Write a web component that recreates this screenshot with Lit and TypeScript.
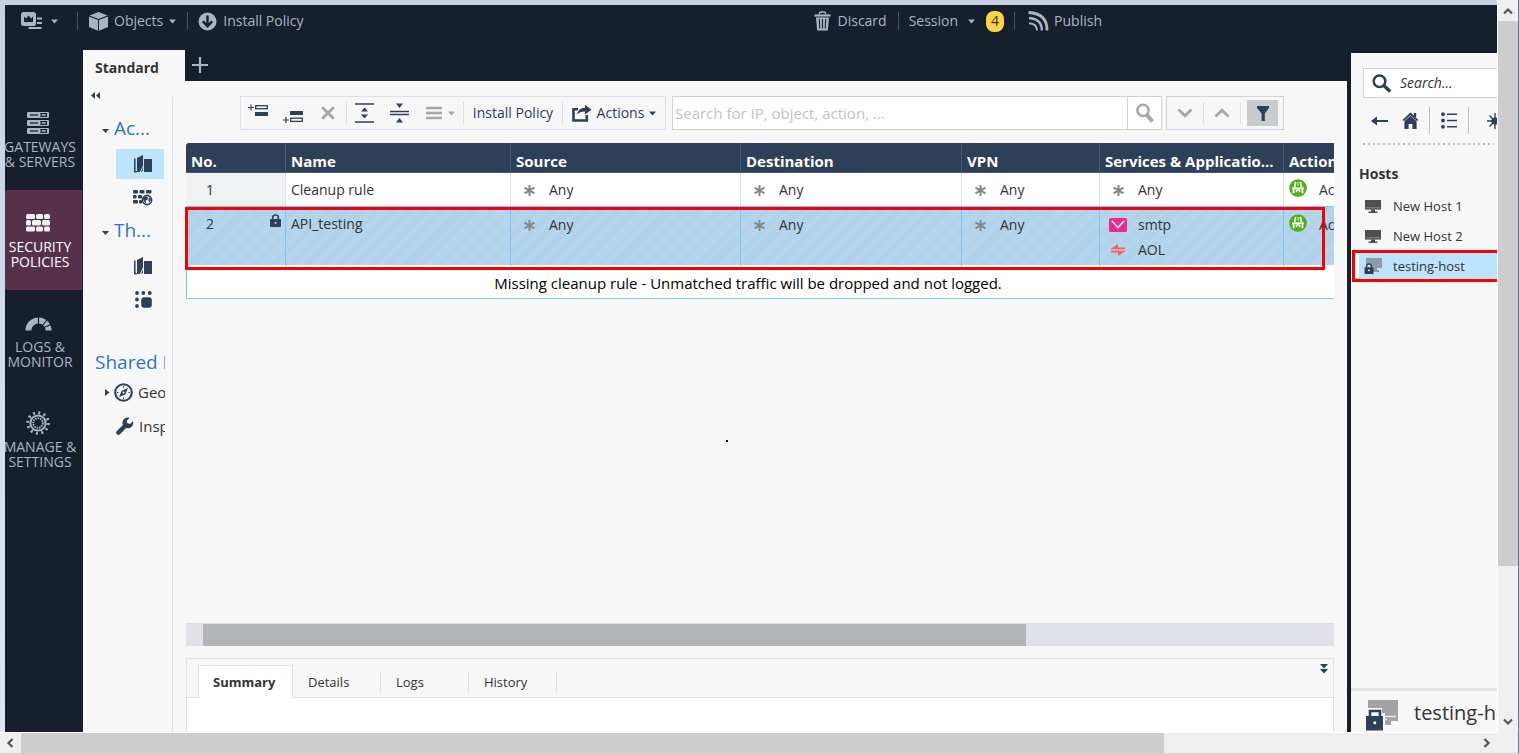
import { LitElement, html, css, svg } from "lit";
import { customElement, state } from "lit/decorators.js";

const caret = html`<svg class="caret" width="7" height="5" viewBox="0 0 7 5"><path d="M0 0.5h7L3.5 4.5z" fill="currentColor" /></svg>`;

const icon = (w: number, h: number, body: unknown) =>
  html`<svg width=${w} height=${h} viewBox="0 0 ${w} ${h}" fill="none" stroke="none" aria-hidden="true">${body}</svg>`;

const I = {
  menu: icon(22, 20, svg`
    <rect x="0" y="1" width="15" height="14" rx="2.5" fill="#aab4c6"/>
    <path d="M3 5.5l1.8 2 2.7-3 2.7 3L12 5.5v5.5H3z" fill="#181f2c"/>
    <path d="M16 7.5h5M16 12h5M7.5 17h13" stroke="#aab4c6" stroke-width="2"/>`),
  cube: icon(19, 19, svg`
    <path d="M9.5 0L18.5 3.4 9.5 7 .5 3.4z" fill="#aab4c6"/>
    <path d="M0 4.6L9 8v10.8L0 15z" fill="#aab4c6"/><path d="M19 4.6L10 8v10.8L19 15z" fill="#aab4c6"/>`),
  down: icon(19, 19, svg`
    <circle cx="9.5" cy="9.5" r="9" fill="#aab4c6"/>
    <path d="M9.5 3.5v10M4.8 9.3l4.7 4.9 4.7-4.9" stroke="#181f2c" stroke-width="2.4"/>`),
  trash: icon(17, 20, svg`
    <path d="M5.5 3.5V2.2Q5.5 1 7 1h3q1.5 0 1.5 1.2v1.3" stroke="#aab4c6" stroke-width="1.4"/>
    <path d="M.5 3.4h16v2.2H.5z" fill="#aab4c6"/>
    <path d="M2 6.6h13l-1.2 13H3.2z" fill="#aab4c6"/>
    <path d="M5.3 8l.5 9.5M8.5 8v9.5M11.7 8l-.5 9.5" stroke="#181f2c" stroke-width="1.1"/>`),
  publish: icon(21, 20, svg`
    <path d="M.5 1.5Q19.5 2.5 19 19.5" stroke="#aab4c6" stroke-width="2.8"/>
    <path d="M1 7Q14 8 13.8 19.5" stroke="#aab4c6" stroke-width="2.3"/>
    <path d="M1 12.3q8 .6 8 7.2" stroke="#aab4c6" stroke-width="1.9"/>`),
  servers: icon(22, 22, svg`
    ${[0, 8, 16].map((y) => svg`<rect x="0" y=${y} width="22" height="6" rx="1" fill="#aab4c6"/>
      <path d="M3 ${y + 3}h8" stroke="#181f2c" stroke-width="1.3"/>
      <rect x="14" y=${y + 1.6} width="5.4" height="2.8" stroke="#181f2c" stroke-width="1.2"/>`)}`),
  bricks: icon(24, 18, svg`<g fill="#f1f1f6">
    <rect x="0" y="0" width="9" height="5" rx="1.5"/><rect x="10" y="0" width="7" height="5" rx="1.5"/><rect x="18" y="0" width="6" height="5" rx="1.5"/>
    <rect x="0" y="6" width="5" height="5.6" rx="1.5"/><rect x="6" y="6" width="9" height="5.6" rx="1.5"/><rect x="16" y="6" width="8" height="5.6" rx="1.5"/>
    <rect x="0" y="12.6" width="9" height="5" rx="1.5"/><rect x="10" y="12.6" width="7" height="5" rx="1.5"/><rect x="18" y="12.6" width="6" height="5" rx="1.5"/></g>`),
  gauge: icon(27, 15, svg`
    <path d="M3.4 14.5A10.1 10.1 0 0 1 23.6 14.5" stroke="#aab4c6" stroke-width="6"/>
    <path d="M13.5 0v8.5M17.5 9.5L23 2.5M19 11.5l8-3.4" stroke="#181f2c" stroke-width="1.2"/>`),
  gear: icon(24, 24, svg`
    <circle cx="12" cy="12" r="7.6" stroke="#aab4c6" stroke-width="2"/>
    <circle cx="12" cy="12" r="10.3" stroke="#aab4c6" stroke-width="3" stroke-dasharray="2 3.393"/>
    <circle cx="12" cy="12" r="4.8" stroke="#aab4c6" stroke-width="1.8" stroke-dasharray="1.6 .8"/>`),
  book: icon(18, 18, svg`
    <path d="M.8 3.5v13.2h2" stroke="#2e4057" stroke-width="1.5"/>
    <path d="M3 3L9 0v10.5L5.8 17H3z" fill="#2e4057"/><path d="M9 12v3.8L7 17z" fill="#2e4057"/>
    <rect x="10" y="4" width="8" height="13" fill="#2e4057"/>`),
  nat: icon(20, 17, svg`<g fill="#2e4057">
    <rect x="0" y="1" width="5" height="3.6" rx="1"/><rect x="6.5" y="1" width="5" height="3.6" rx="1"/><rect x="13" y="1" width="5.5" height="3.6" rx="1"/>
    <rect x="0" y="6" width="3.6" height="3.6" rx="1"/><rect x="5" y="6" width="4" height="3.6" rx="1"/>
    <rect x="0" y="11" width="5" height="3.6" rx="1"/><rect x="6" y="11" width="3" height="3.6" rx="1"/></g>
    <circle cx="14" cy="11" r="4.6" stroke="#2e4057" stroke-width="1.6"/><path d="M10 8.5l3.5-1 1.5 1-.5 2.2-1.8.8.5 3-1.6-1.2-1.4-2.6zM16 8l2 2.5-1.5 3-1.2-2z" fill="#2e4057"/>`),
  dots: icon(17, 17, svg`<g fill="#2e4057">
    <circle cx="2" cy="2" r="1.9"/><circle cx="8.3" cy="2" r="1.9"/><circle cx="14.8" cy="2" r="1.9"/>
    <circle cx="2" cy="8.5" r="1.9"/><circle cx="2" cy="15" r="1.9"/><rect x="6.2" y="6.2" width="10.6" height="10.6" rx="3"/></g>`),
  compass: icon(19, 19, svg`
    <circle cx="9.5" cy="9.5" r="8.3" stroke="#2e4057" stroke-width="2.1"/>
    <path d="M14 5l-2.7 6.4L5 14l2.7-6.3z" fill="#2e4057"/><circle cx="9.5" cy="9.5" r="1" fill="#f7f7f7"/>
    <path d="M9.5 3v1.5M9.5 14.5V16M3 9.5h1.5M14.5 9.5H16" stroke="#2e4057"/>`),
  wrench: icon(18, 18, svg`
    <path d="M2.4 15.6L9.8 8.2" stroke="#2e4057" stroke-width="4.4" stroke-linecap="round"/>
    <path d="M13.8 0.8A5.4 5.4 0 1 0 17 4.3L14 7l-2.6-.8-.7-2.5z" fill="#2e4057"/>`),
  addAbove: icon(20, 16, svg`
    <path d="M0 3.5h6M3 .5v6" stroke="#2e4057" stroke-width="1.2"/>
    <rect x="7.7" y="1.7" width="11.6" height="3" stroke="#2e4057" stroke-width="1.3"/><rect x="7" y="8" width="13" height="4" fill="#2e4057"/>`),
  addBelow: icon(20, 12, svg`
    <path d="M0 9h6M3 6v6" stroke="#2e4057" stroke-width="1.2"/>
    <rect x="7" y="0" width="13" height="4" fill="#2e4057"/><rect x="7.7" y="7.2" width="11.6" height="3.2" stroke="#2e4057" stroke-width="1.3"/>`),
  cross: icon(14, 14, svg`<path d="M1.2 1.2l11.6 11.6M12.8 1.2L1.2 12.8" stroke="#a4a7ab" stroke-width="2.8"/>`),
  expand: icon(19, 20, svg`
    <path d="M0 1h19M0 19h19" stroke="#2e4057" stroke-width="1.6"/><path d="M6 8.5h7L9.5 4.5zM6 11.5h7l-3.5 4z" fill="#2e4057"/>`),
  collapse: icon(19, 20, svg`
    <path d="M0 8.5h19M0 11.5h19" stroke="#2e4057" stroke-width="1.4"/><path d="M6 0.5h7L9.5 5zM6 19.5h7L9.5 15z" fill="#2e4057"/>`),
  lines: icon(16, 14, svg`<path d="M0 2h16M0 7h16M0 12h16" stroke="#a4a7ab" stroke-width="2.4"/>`),
  share: icon(20, 18, svg`
    <path d="M6 5.2H1.5v11.3h13.3V11" stroke="#2e4057" stroke-width="2.6"/>
    <path d="M5.2 10.8Q6 4 13 3.8V.8l6.6 5L13 10.4V7.6Q8 7.4 5.2 10.8z" fill="#2e4057"/>`),
  lensGrey: icon(18, 20, svg`<circle cx="7" cy="7.3" r="5.6" stroke="#a4a7ab" stroke-width="2.5"/><path d="M11 12l5.4 6.6" stroke="#a4a7ab" stroke-width="4"/>`),
  lens: icon(20, 19, svg`<circle cx="7.5" cy="7.3" r="5.8" stroke="#2e4057" stroke-width="2.5"/><path d="M11.8 11.5l6.4 6" stroke="#2e4057" stroke-width="3.4"/>`),
  chevDown: icon(16, 10, svg`<path d="M1.5 1.5L8 7.8l6.5-6.3" stroke="#a4a7ab" stroke-width="2.8"/>`),
  chevUp: icon(16, 10, svg`<path d="M1.5 8.5L8 2.2l6.5 6.3" stroke="#a4a7ab" stroke-width="2.8"/>`),
  funnel: icon(12, 15, svg`<path d="M0 0h12v2L7.8 7.5V15H4.6V7.5L0 2z" fill="#2e4057"/>`),
  any: icon(11, 11, svg`<path d="M5.5 0v11M.5 2.6l10 5.8M.5 8.4l10-5.8" stroke="#84878a" stroke-width="2"/>`),
  lock: icon(11, 13, svg`<path d="M2.7 6V3.2q0-2.2 2.8-2.2t2.8 2.2V6" stroke="#2e4057" stroke-width="1.6"/><rect x="0" y="5" width="11" height="8" rx="1" fill="#2e4057"/><rect x="4.7" y="8" width="1.8" height="1.8" fill="#b9d7ee"/>`),
  mail: icon(18, 14, svg`<rect width="18" height="14" rx="1.5" fill="#ee2a8e"/><path d="M2.8 2.8L9 9.6l6.2-6.8" stroke="#fff" stroke-width="1.5"/>`),
  aol: icon(16, 12, svg`<path d="M0 5.2L8 0v3.4h7v1.8zM16 6.8L8 12V8.6H1V6.8z" fill="#f8605e"/>`),
  accept: icon(18, 18, svg`<circle cx="9" cy="9" r="8.8" fill="#4fae14"/>
    <path d="M6.6 2.8L5.6 8M11.4 2.8l1 5.2" stroke="#fff" stroke-width="1.8"/>
    <path d="M3 8.4h12v1.8H3z" fill="#fff"/><path d="M4.6 9v5.2M13.4 9v5.2" stroke="#fff" stroke-width="1.8"/>
    <path d="M7.4 10.8v2.4M10.6 10.8v2.4M7.4 11h3.2" stroke="#fff" stroke-width="1.4"/><path d="M9 3v4" stroke="#fff" stroke-width=".8"/>`),
  back: icon(17, 10, svg`<path d="M4 5h13" stroke="#2e4057" stroke-width="2"/><path d="M0 5l6-4.6v9.2z" fill="#2e4057"/>`),
  home: icon(17, 17, svg`<path d="M8.5 .5L16.5 8 15 9 8.5 3.2 2 9 .5 8z" fill="#2e4057"/><path d="M8.5 3.8L14.6 9.2V17H10.4v-5H6.6v5H2.4V9.2z" fill="#2e4057"/><rect x="11.8" y="1" width="2.4" height="4" fill="#2e4057"/>`),
  list: icon(17, 17, svg`<g fill="#2e4057"><circle cx="2" cy="2.2" r="1.9"/><circle cx="2" cy="8.5" r="1.9"/><circle cx="2" cy="14.8" r="1.9"/></g><path d="M6 2.2h10M6 8.5h10M6 14.8h10" stroke="#2e4057" stroke-width="1.5"/>`),
  star: icon(18, 16, svg`<circle cx="9" cy="8" r="3.6" fill="#2e4057"/><path d="M9 0v16M1 8h16M3.5 2.5l11 11M14.5 2.5l-11 11" stroke="#2e4057" stroke-width="1.4"/>`),
  host: icon(16, 13, svg`<rect x="0" y="0" width="16" height="9.6" fill="#4f4f4f"/><path d="M1 7.8h14" stroke="#8a8a8a"/><path d="M6 9.6h4v2h2.5V13h-9v-1.4H6z" fill="#4f4f4f"/>`),
  hostLock: icon(18, 16, svg`<path d="M2 0h16v10h-5v2h2v2H8V6H2z" fill="#8b9dab"/><path d="M2.6 9.5V8q0-2 2.4-2t2.4 2v1.5" stroke="#2e4057" stroke-width="1.5"/><rect x=".5" y="9.2" width="9" height="6.8" fill="#2e4057"/><rect x="4.2" y="11.6" width="1.6" height="1.6" fill="#fff"/>`),
  hostBig: icon(36, 32, svg`<rect x="5" y="1" width="30" height="21" fill="#a3a3a3"/><path d="M21 17.5h12M24 20.5h-2M21 24h6" stroke="#e6e6e6" stroke-width="1.4"/><path d="M22 22h6v4h-6z" fill="#a3a3a3"/><path d="M2 32V14h3V9h14v5h3v18z" fill="#f7f7f7"/><path d="M7 19v-7h10v7" stroke="#2e4057" stroke-width="2.6"/><rect x="3" y="17" width="17" height="14.5" fill="#2e4057"/><rect x="10.5" y="22.5" width="2.6" height="2.6" fill="#fff"/>`),
  triDown: icon(7, 4, svg`<path d="M0 0h7L3.5 4z" fill="#2e4057"/>`),
  triRight: icon(5, 7, svg`<path d="M0 0v7l4.5-3.5z" fill="#2e4057"/>`),
  rewind: icon(9, 7, svg`<path d="M4 0v7L0 3.5zM9 0v7L5 3.5z" fill="#2e4057"/>`),
  fold: icon(8, 10, svg`<path d="M0 0h8L4 4.4zM0 5h8L4 9.4z" fill="#2e4057"/>`),
  plus: icon(16, 16, svg`<path d="M8 0v16M0 8h16" stroke="#aab4c6" stroke-width="2.2"/>`),
};

const arrow = (d: string) => icon(10, 10, svg`<path d=${d} stroke="#555" stroke-width="2.2"/>`);

const NAV = [
  { lines: ["GATEWAYS", "& SERVERS"], icon: I.servers },
  { lines: ["SECURITY", "POLICIES"], icon: I.bricks },
  { lines: ["LOGS &", "MONITOR"], icon: I.gauge },
  { lines: ["MANAGE &", "SETTINGS"], icon: I.gear },
];

const anyCell = html`<span class="val">${I.any}<span>Any</span></span>`;

@customElement("app-root")
export class AppRoot extends LitElement {
  @state() private section = 1;
  @state() private tab = "Summary";

  static styles = css`
    :host {
      display: grid;
      grid-template: minmax(0, 1fr) 22px / minmax(0, 1fr) 22px;
      height: 100vh;
      box-sizing: border-box;
      font: 14px/20px "Open Sans", "Noto Sans", sans-serif;
      color: #333;
      background: #efefef;
      overflow: hidden;
    }
    * { box-sizing: border-box; }
    svg { display: block; flex: none; }
    button {
      font: inherit; color: inherit; background: none; border: 0; padding: 0; margin: 0;
      display: flex; align-items: center; white-space: nowrap;
    }
    .app {
      padding: 5px 0 0 5px;
      background: linear-gradient(#c8d1e2, #dbe6f4);
      display: flex; overflow: hidden;
    }
    .window { flex: 1; min-width: 0; display: flex; flex-direction: column; background: #181f2c; }
    .top { display: flex; height: 45px; padding-bottom: 13px; align-items: center; color: #aab4c6; flex: none; padding-left: 16px; }
    .top .sep { width: 1px; height: 18px; background: #475260; }
    .top .menu { gap: 8px; margin-right: 19px; }
    .objects { gap: 6px; margin: 0 11px 0 11px; }
    .install { gap: 6px; margin-left: 10px; }
    .session-group { display: flex; align-items: center; margin-left: auto; margin-right: 395px; }
    .discard { gap: 7px; margin-right: 11px; }
    .session { gap: 10px; margin: 0 11px 0 10px; }
    .count { width: 18px; height: 21px; border-radius: 8px; background: #ffd447; color: #333; text-align: center; margin-right: 10px; }
    .publish { gap: 5px; margin-left: 13px; }
    .body { flex: 1; min-height: 0; display: flex; }
    nav { width: 78px; padding-top: 40px; flex: none; overflow: hidden; }
    nav button {
      width: 77px; height: 100px; flex-direction: column; padding-top: 21px; gap: 4px;
      color: #aab4c6; font-size: 14px; line-height: 15px;
    }
    nav .pic { height: 24px; display: flex; align-items: center; flex: none; margin-left: -11px; }
    nav .lbl { margin-left: -7px; }
    nav button.on { background: #553249; color: #fff; }
    main { flex: 1; min-width: 0; display: flex; flex-direction: column; }
    .tabs { display: flex; height: 31px; flex: none; }
    .tabs .std { width: 102px; padding: 4px 0 0 12px; background: #f7f7f7; font-weight: 700; }
    .tabs .add { width: 30px; height: 30px; justify-content: center; }
    .work { flex: 1; min-height: 0; display: flex; background: #f7f7f7; }
    .tree { width: 103px; flex: none; display: flex; flex-direction: column; }
    .rewind { height: 16px; padding: 11px 0 0 8px; align-items: start; overflow: visible; }
    .items { flex: 1; width: 90px; border-right: 1px solid #dfe1e6; padding: 16px 7px 0 0; overflow: hidden; font-size: 15px; }
    .items button { height: 30px; width: 100%; overflow: hidden; }
    .items .head { color: #2f74c9; font-size: 19px; padding-left: 19px; gap: 5px; }
    .items .head svg { margin-top: 6px; }
    .items .leaf { width: 48px; margin: 3px 0 3px 33px; justify-content: center; padding-left: 6px; }
    .items .head + .leaf { margin-top: 6px; }
    .items .leaf.on { background: #bce4ff; }
    .items .shared { margin-top: 33px; color: #2f74c9; font-size: 19px; padding-left: 12px; }
    .items .geo { padding-left: 22px; gap: 5px; }
    .items .geo svg + svg { margin-left: -1px; }
    .items .insp { padding-left: 33px; gap: 5px; margin-top: 4px; }
    .content { flex: 1; min-width: 0; padding: 15px 13px 0 0; display: flex; flex-direction: column; }
    .bar { display: flex; margin: 0 50px 13px 54px; height: 34px; flex: none; color: #2e4057; }
    .tools { display: flex; align-items: center; border: 1px solid #dfe2e7; margin-right: 6px; }
    .tools button, .find button { height: 32px; justify-content: center; }
    .sq { width: 35px; }
    .tools .above { width: 34px; padding-bottom: 2px; }
    .tools .below { padding-top: 7px; }
    .tools .wide { width: 36px; }
    .tools .list { width: 46px; gap: 6px; color: #a4a7ab; }
    .tools .inst { width: 98px; }
    .tools .act { width: 102px; gap: 5px; }
    .tools .sep, .find .sep { width: 1px; height: 22px; background: #dcdfe4; }
    .search { flex: 1; min-width: 0; display: flex; border: 1px solid #cfd2d6; background: #fff; }
    .search input { flex: 1; min-width: 0; border: 0; padding: 0 2px; font: inherit; font-size: 15px; background: none; outline: 0; }
    .search input::placeholder { color: #bfc3c9; opacity: 1; }
    .search button { width: 34px; justify-content: center; border-left: 1px solid #cfd2d6; }
    .find { display: flex; align-items: center; width: 118px; margin-left: 4px; border: 1px solid #cfd2d6; }
    .find .sq { width: 36px; }
    .find .filter { width: 31px; height: 26px; background: #c9cbcd; margin-left: 6px; }
    .grid { flex: 1; min-height: 0; position: relative; }
    table { width: 100%; table-layout: fixed; border-collapse: separate; border-spacing: 0; }
    th, td { text-align: left; padding: 0 0 0 5px; vertical-align: top; overflow: hidden; white-space: nowrap; }
    th { height: 30px; background: #2e4057; color: #fff; padding-top: 8px; border-right: 1px solid #455a78; border-bottom: 1px solid #455a78; line-height: 20px; font-size: 15px; }
    th:first-child { border-top-left-radius: 3px; }
    th:last-child, td:last-child { border-right: 0; }
    td { background: #fff; height: 33px; padding-top: 7px; border-right: 1px solid #dfe1e6; }
    td.no { background: #f0f1f3; padding-left: 20px; }
    .picked td {
      height: 61px; border-right-color: #7fc4f2; border-top: 1px solid #7fc4f2; border-bottom: 2px solid #fff;
      background: repeating-linear-gradient(135deg, #b8d8f0 0 1px, #aecfe8 1px 2px);
    }
    .no .pair { display: flex; justify-content: space-between; padding-right: 4px; }
    .val { display: flex; align-items: center; gap: 14px; padding-left: 8px; height: 20px; }
    .picked .val { margin-top: 1px; }
    .picked .val + .val { margin-top: 5px; }
    .val.svc { padding-left: 4px; gap: 11px; }
    .val.svc.aol { padding-left: 5px; gap: 12px; }
    .val.acc { padding-left: 0; gap: 12px; }
    .val.acc svg { margin-top: -4px; }
    .missing td { height: 32px; padding: 6px 25px 0 0; text-align: center; font-size: 15px; color: #000; border: 1px solid #7fc4f2; border-top: 0; border-right: 0; }
    .mark { position: absolute; left: -1px; right: 9px; top: 64px; height: 63px; border: 3px solid #f60000; pointer-events: none; }
    .dot { position: absolute; left: 47%; top: 297px; width: 2px; height: 2px; background: #000; }
    .hbar { height: 23px; flex: none; background: #dfe2e7; padding: 1px 0 0 17px; display: flex; }
    .hbar .thumb { height: 22px; flex: 823; background: #b1b5b8; }
    .hbar .rest { flex: 308; }
    .detail { margin-top: 12px; height: 74px; flex: none; border: 1px solid #dfe1e6; border-bottom: 0; background: #fff; font-size: 13px; }
    .dtabs { display: flex; height: 39px; padding: 6px 0 0 11px; background: #f7f7f7; border-bottom: 1px solid #dfe1e6; }
    .dtabs button { width: 88px; height: 22px; margin-top: 6px; padding-left: 15px; border-right: 1px solid #dfe1e6; }
    .dtabs button.on { width: 95px; height: 33px; margin: 0; padding-left: 14px; background: #fff; border: 1px solid #dfe1e6; border-bottom: 0; font-weight: 700; }
    .dtabs .fold { margin: -1px 5px 0 auto; width: 8px; height: 10px; padding: 0; border: 0; }
    aside { width: 146px; flex: none; margin: 3px 0 0 4px; background: #f7f7f7; display: flex; flex-direction: column; overflow: hidden; }
    .osearch { display: flex; align-items: center; height: 30px; margin: 15px 0 0 12px; border: 1px solid #cfd2d6; border-right: 0; background: #fff; padding-left: 8px; gap: 8px; flex: none; }
    .osearch input { width: 85px; min-width: 0; border: 0; padding: 0; font: inherit; font-style: italic; outline: 0; background: none; }
    .osearch input::placeholder { color: #333; opacity: 1; }
    .oicons { display: flex; align-items: center; height: 45px; flex: none; padding-left: 20px; margin-right: -20px; }
    .oicons .sep { width: 1px; height: 27px; background: #b9bec8; }
    .oicons .home { margin: 0 10px 0 14px; }
    .oicons .lst { margin: 0 10px 0 11px; }
    .oicons .new { margin-left: 17px; }
    .dots { height: 2px; margin: 0 3px 0 12px; flex: none; background: repeating-linear-gradient(90deg, #b9bec8 0 2px, transparent 2px 5px); }
    h3 { margin: 19px 0 7px 8px; font-size: 14px; line-height: 20px; flex: none; }
    .host { height: 30px; gap: 12px; padding-left: 14px; font-size: 13px; flex: none; }
    .host.on { height: 32px; margin: -1px -3px 0 1px; padding-left: 9px; gap: 11px; border: 3px solid #f60000;
      background: linear-gradient(90deg, #fff 4px, #bce4ff 4px); }
    .sel { margin-top: auto; height: 44px; border-top: 3px solid #dfe2e7; display: flex; gap: 15px; padding: 8px 0 0 12px; font-size: 20px; line-height: 28px; white-space: nowrap; flex: none; }
    .vscroll, .hscroll { display: flex; align-items: center; background: #efefef; }
    .vscroll { flex-direction: column; border: solid #fff; border-width: 0 1px; box-shadow: inset -1px 0 0 #fff; border-right-color: #2586d8; }
    .vscroll button, .hscroll button { width: 20px; height: 21px; justify-content: center; flex: none; }
    .vthumb { width: 100%; flex: 545; background: #cdcdcd; }
    .vrest { flex: 145; }
    .hscroll { border-top: 1px solid #fff; border-bottom: 1px solid #d0d0d0; }
    .hthumb { height: 100%; flex: 1143; background: #cdcdcd; margin-left: 1px; }
    .hrest { flex: 313; }
    .corner { border-right: 1px solid #2586d8; border-bottom: 1px solid #d0d0d0; }
  `;

  render() {
    return html`
      <div class="app">
        <div class="window">
          <header class="top">
            <button class="menu" aria-label="Menu">${I.menu}${caret}</button><span class="sep"></span>
            <button class="objects">${I.cube}<span>Objects</span>${caret}</button><span class="sep"></span>
            <button class="install">${I.down}<span>Install Policy</span></button>
            <div class="session-group">
              <button class="discard">${I.trash}<span>Discard</span></button><span class="sep"></span>
              <button class="session"><span>Session</span>${caret}</button>
              <span class="count">4</span><span class="sep"></span>
              <button class="publish">${I.publish}<span>Publish</span></button>
            </div>
          </header>
          <div class="body">
            <nav>
              ${NAV.map((n, i) => html`<button class=${i === this.section ? "on" : ""} @click=${() => (this.section = i)}>
                <span class="pic">${n.icon}</span><span class="lbl">${n.lines[0]}<br />${n.lines[1]}</span></button>`)}
            </nav>
            <main>
              <div class="tabs"><button class="std">Standard</button><button class="add" aria-label="New tab">${I.plus}</button></div>
              <div class="work">
                <div class="tree">
                  <button class="rewind" aria-label="Collapse">${I.rewind}</button>
                  <div class="items">
                    <button class="head">${I.triDown}<span>Ac...</span></button>
                    <button class="leaf on" aria-label="Policy">${I.book}</button>
                    <button class="leaf" aria-label="NAT">${I.nat}</button>
                    <button class="head">${I.triDown}<span>Th...</span></button>
                    <button class="leaf" aria-label="Threat policy">${I.book}</button>
                    <button class="leaf" aria-label="Exceptions">${I.dots}</button>
                    <button class="shared">Shared Policies</button>
                    <button class="geo">${I.triRight}${I.compass}<span>Geo Policy</span></button>
                    <button class="insp">${I.wrench}<span>Inspection Settings</span></button>
                  </div>
                </div>
                <div class="content">${this.toolbar()}${this.rules()}${this.details()}</div>
              </div>
            </main>
            ${this.objects()}
          </div>
        </div>
      </div>
      <div class="vscroll">
        <button aria-label="Up">${arrow("M1 7.5l4-4 4 4")}</button><div class="vthumb"></div><div class="vrest"></div>
        <button aria-label="Down">${arrow("M1 2.5l4 4 4-4")}</button>
      </div>
      <div class="hscroll">
        <button aria-label="Left">${arrow("M7.5 1l-4 4 4 4")}</button><div class="hthumb"></div><div class="hrest"></div>
        <button aria-label="Right">${arrow("M2.5 1l4 4-4 4")}</button>
      </div>
      <div class="corner"></div>
    `;
  }

  private toolbar() {
    return html`<div class="bar">
      <div class="tools">
        <button class="sq above" aria-label="Add rule above">${I.addAbove}</button>
        <button class="sq below" aria-label="Add rule below">${I.addBelow}</button>
        <button class="sq wide" aria-label="Delete">${I.cross}</button><span class="sep"></span>
        <button class="sq" aria-label="Expand">${I.expand}</button>
        <button class="sq" aria-label="Collapse">${I.collapse}</button>
        <button class="list" aria-label="View">${I.lines}${caret}</button><span class="sep"></span>
        <button class="inst">Install Policy</button><span class="sep"></span>
        <button class="act">${I.share}<span>Actions</span>${caret}</button>
      </div>
      <div class="search">
        <input type="text" aria-label="Search rules" placeholder="Search for IP, object, action, ..." />
        <button aria-label="Search">${I.lensGrey}</button>
      </div>
      <div class="find">
        <button class="sq" aria-label="Next">${I.chevDown}</button><span class="sep"></span>
        <button class="sq" aria-label="Previous">${I.chevUp}</button><span class="sep"></span>
        <button class="filter" aria-label="Filter">${I.funnel}</button>
      </div>
    </div>`;
  }

  private rules() {
    const accept = html`<span class="val acc">${I.accept}<span>Accept</span></span>`;
    return html`<div class="grid">
      <table>
        <colgroup>${[100, 225, 230, 221, 138, 184].map((w) => html`<col style="width:${w}px" />`)}<col /></colgroup>
        <thead><tr>${["No.", "Name", "Source", "Destination", "VPN", "Services & Applicatio...", "Action"].map((h) => html`<th>${h}</th>`)}</tr></thead>
        <tbody>
          <tr><td class="no">1</td><td>Cleanup rule</td><td>${anyCell}</td><td>${anyCell}</td><td>${anyCell}</td><td>${anyCell}</td><td>${accept}</td></tr>
          <tr class="picked">
            <td class="no"><div class="pair"><span>2</span>${I.lock}</div></td>
            <td>API_testing</td><td>${anyCell}</td><td>${anyCell}</td><td>${anyCell}</td>
            <td><span class="val svc">${I.mail}<span>smtp</span></span><span class="val svc aol">${I.aol}<span>AOL</span></span></td>
            <td>${accept}</td>
          </tr>
          <tr class="missing"><td colspan="7">Missing cleanup rule - Unmatched traffic will be dropped and not logged.</td></tr>
        </tbody>
      </table>
      <div class="mark"></div><div class="dot"></div>
    </div>
    <div class="hbar"><div class="thumb"></div><div class="rest"></div></div>`;
  }

  private details() {
    return html`<div class="detail"><div class="dtabs">
      ${["Summary", "Details", "Logs", "History"].map((t) => html`<button class=${t === this.tab ? "on" : ""} @click=${() => (this.tab = t)}>${t}</button>`)}
      <button class="fold" aria-label="Hide details">${I.fold}</button>
    </div></div>`;
  }

  private objects() {
    return html`<aside>
      <div class="osearch">${I.lens}<input type="text" aria-label="Search objects" placeholder="Search..." /></div>
      <div class="oicons">
        <button aria-label="Back">${I.back}</button><button class="home" aria-label="Home">${I.home}</button><span class="sep"></span>
        <button class="lst" aria-label="List">${I.list}</button><span class="sep"></span>
        <button class="new" aria-label="New">${I.star}</button>
      </div>
      <div class="dots"></div>
      <h3>Hosts</h3>
      <button class="host">${I.host}<span>New Host 1</span></button>
      <button class="host">${I.host}<span>New Host 2</span></button>
      <button class="host on">${I.hostLock}<span>testing-host</span></button>
      <div class="sel">${I.hostBig}<span>testing-host</span></div>
    </aside>`;
  }
}
